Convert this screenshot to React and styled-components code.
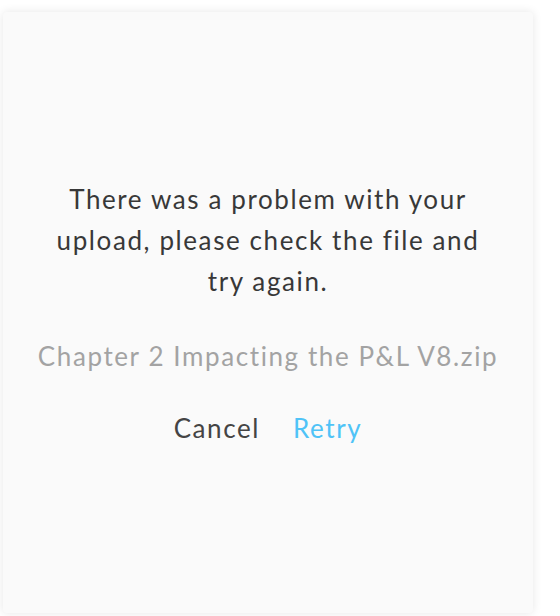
import styled, { createGlobalStyle } from "styled-components";

const GlobalStyle = createGlobalStyle`
  html, body {
    margin: 0;
    padding: 0;
    background: #ffffff;
  }
  body {
    font-family: Lato, "Noto Sans", sans-serif;
  }
`;

export default function App() {
  return (
    <Page>
      <GlobalStyle />
      <Card>
        <Message>
          There was a problem with your upload, please check the file and try again.
        </Message>
        <FileName>Chapter 2 Impacting the P&amp;L V8.zip</FileName>
        <Actions>
          <ActionButton>Cancel</ActionButton>
          <ActionButton primary>Retry</ActionButton>
        </Actions>
      </Card>
    </Page>
  );
}

const Page = styled.div`
  padding: 12px 27px 3px 3px;
  box-sizing: border-box;
  width: 560px;
  height: 616px;
`;

const Card = styled.div`
  box-sizing: border-box;
  width: 530px;
  height: 601px;
  background: #fafafa;
  border-radius: 4px;
  box-shadow: 0 0 10px rgba(0, 0, 0, 0.1);
  display: flex;
  flex-direction: column;
  align-items: center;
  justify-content: center;
  padding: 0 20px;
`;

const Message = styled.p`
  margin: 0;
  max-width: 430px;
  text-align: center;
  font-size: 26px;
  line-height: 41px;
  letter-spacing: 1.6px;
  color: #383838;
`;

const FileName = styled.div`
  margin-top: 36px;
  font-size: 26px;
  line-height: 36px;
  letter-spacing: 1.6px;
  color: #a3a3a3;
  white-space: nowrap;
`;

const Actions = styled.div`
  margin-top: 36px;
  display: flex;
  gap: 33px;
`;

const ActionButton = styled.button`
  border: none;
  background: none;
  padding: 0;
  font-family: Lato, "Noto Sans", sans-serif;
  font-size: 26px;
  line-height: 36px;
  letter-spacing: 1.6px;
  color: ${(p) => (p.primary ? "#4fc3f7" : "#444444")};
  cursor: pointer;
`;
